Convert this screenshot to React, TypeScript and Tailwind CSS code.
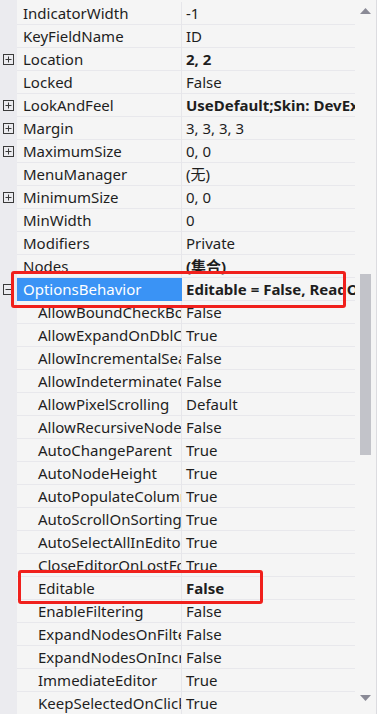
import React from 'react';

type Row = {
  name: string;
  value: string;
  bold?: boolean;
  expand?: 'plus' | 'minus';
  child?: boolean;
  selected?: boolean;
};

const rows: Row[] = [
  { name: 'IndicatorWidth', value: '-1' },
  { name: 'KeyFieldName', value: 'ID' },
  { name: 'Location', value: '2, 2', bold: true, expand: 'plus' },
  { name: 'Locked', value: 'False' },
  { name: 'LookAndFeel', value: 'UseDefault;Skin: DevExpress Style', bold: true, expand: 'plus' },
  { name: 'Margin', value: '3, 3, 3, 3', expand: 'plus' },
  { name: 'MaximumSize', value: '0, 0', expand: 'plus' },
  { name: 'MenuManager', value: '(无)' },
  { name: 'MinimumSize', value: '0, 0', expand: 'plus' },
  { name: 'MinWidth', value: '0' },
  { name: 'Modifiers', value: 'Private' },
  { name: 'Nodes', value: '(集合)', bold: true },
  { name: 'OptionsBehavior', value: 'Editable = False, ReadOnly = False', bold: true, expand: 'minus', selected: true },
  { name: 'AllowBoundCheckBoxesInVirtualMode', value: 'False', child: true },
  { name: 'AllowExpandOnDblClick', value: 'True', child: true },
  { name: 'AllowIncrementalSearch', value: 'False', child: true },
  { name: 'AllowIndeterminateCheckState', value: 'False', child: true },
  { name: 'AllowPixelScrolling', value: 'Default', child: true },
  { name: 'AllowRecursiveNodeChecking', value: 'False', child: true },
  { name: 'AutoChangeParent', value: 'True', child: true },
  { name: 'AutoNodeHeight', value: 'True', child: true },
  { name: 'AutoPopulateColumns', value: 'True', child: true },
  { name: 'AutoScrollOnSorting', value: 'True', child: true },
  { name: 'AutoSelectAllInEditor', value: 'True', child: true },
  { name: 'CloseEditorOnLostFocus', value: 'True', child: true },
  { name: 'Editable', value: 'False', bold: true, child: true },
  { name: 'EnableFiltering', value: 'False', child: true },
  { name: 'ExpandNodesOnFiltering', value: 'False', child: true },
  { name: 'ExpandNodesOnIncrementalSearch', value: 'False', child: true },
  { name: 'ImmediateEditor', value: 'True', child: true },
  { name: 'KeepSelectedOnClick', value: 'True', child: true },
];

function ExpandBox({ kind }: { kind: 'plus' | 'minus' }) {
  return (
    <svg width="11" height="11" viewBox="0 0 11 11" className="block">
      <rect x="0.5" y="0.5" width="10" height="10" fill="none" stroke="#3a3a3a" strokeWidth="1" />
      <line x1="2.5" y1="5.5" x2="8.5" y2="5.5" stroke="#3a3a3a" strokeWidth="1" />
      {kind === 'plus' && <line x1="5.5" y1="2.5" x2="5.5" y2="8.5" stroke="#3a3a3a" strokeWidth="1" />}
    </svg>
  );
}

function PropRow({ row }: { row: Row }) {
  return (
    <div className="flex h-[23px]">
      <div className="w-[17px] shrink-0 bg-[#ebebef] flex items-center pl-[3px]">
        {row.expand && <ExpandBox kind={row.expand} />}
      </div>
      <div
        className={
          row.selected
            ? 'w-[164px] shrink-0 overflow-hidden whitespace-nowrap bg-[#3a93f5] text-white border-b border-[#3a93f5] leading-[22px]'
            : 'w-[164px] shrink-0 overflow-hidden whitespace-nowrap border-b border-[#e8e8ec] leading-[22px]'
        }
      >
        <span className={row.child ? 'pl-[21px]' : 'pl-[6px]'}>{row.name}</span>
      </div>
      <div className={row.selected ? 'w-px shrink-0 bg-[#3a93f5]' : 'w-px shrink-0 bg-[#e6e6ea]'} />
      <div
        className={
          row.bold
            ? 'flex-1 min-w-0 overflow-hidden whitespace-nowrap border-b border-[#e8e8ec] pl-[4px] leading-[22px] font-bold'
            : 'flex-1 min-w-0 overflow-hidden whitespace-nowrap border-b border-[#e8e8ec] pl-[4px] leading-[22px]'
        }
      >
        {row.value}
      </div>
    </div>
  );
}

export default function App() {
  return (
    <div
      className="relative w-[377px] h-[714px] overflow-hidden bg-[#f5f5f5] text-[#1e1e1e] text-[15px] flex"
      style={{ fontFamily: '"Noto Sans", "Noto Sans CJK SC", sans-serif' }}
    >
      {/* grid */}
      <div className="w-[355px] shrink-0 flex flex-col">
        <div className="flex h-[2px] shrink-0">
          <div className="w-[17px] bg-[#ebebef]" />
        </div>
        {rows.map((r) => (
          <PropRow key={r.name} row={r} />
        ))}
      </div>

      {/* scrollbar */}
      <div className="w-[22px] shrink-0 border-r border-[#dcdce0] flex flex-col items-start pl-[5px]">
        <div className="h-[22px] flex items-center">
          <svg width="11" height="6" viewBox="0 0 11 6">
            <polygon points="5.5,0 11,6 0,6" fill="#8a8a96" />
          </svg>
        </div>
        <div className="h-[252px]" />
        <div className="w-[11px] h-[181px] bg-[#c2c3c9]" />
        <div className="flex-1" />
        <div className="h-[20px] flex items-start pt-[1px]">
          <svg width="11" height="6" viewBox="0 0 11 6">
            <polygon points="0,0 11,0 5.5,6" fill="#8a8a96" />
          </svg>
        </div>
      </div>

      {/* annotation boxes */}
      <div className="absolute left-[11px] top-[271px] w-[335px] h-[37px] border-[3px] border-[#f0201c] rounded-[3px]" />
      <div className="absolute left-[18px] top-[570px] w-[245px] h-[34px] border-[3px] border-[#f0201c] rounded-[3px]" />
    </div>
  );
}
